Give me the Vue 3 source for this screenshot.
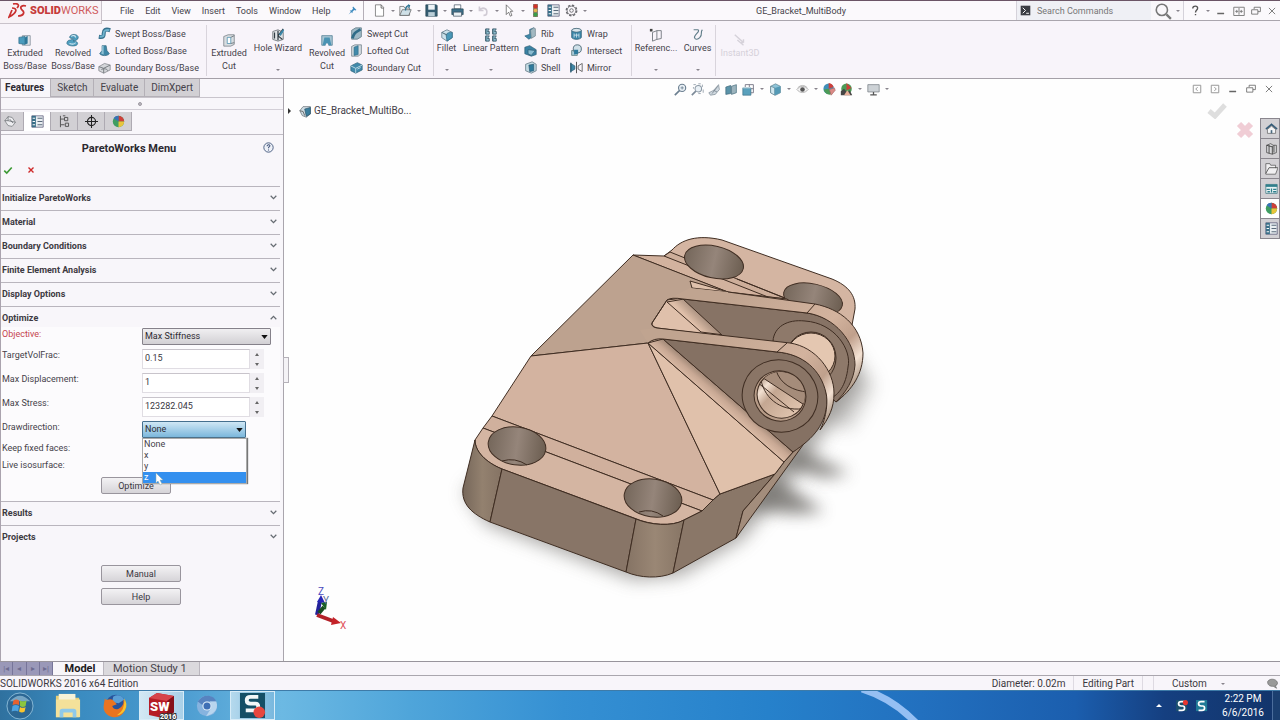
<script setup>
import { ref, h } from 'vue'

const stroke = (d, c = '#5c6268', w = 1.2) => `<path d="${d}" fill="none" stroke="${c}" stroke-width="${w}"/>`
const fill = (d, c, s = 'none') => `<path d="${d}" fill="${c}" stroke="${s}" stroke-width=".8"/>`

const icons = {
  extrude: fill('M5 3h9v11H5z', '#dce3e8', '#7b8790') + fill('M1 5l7-1v9l-7-1z', '#4a9bbd', '#2f6d8a') + fill('M8 5l3-2v9l-3 1z', '#2e7698'),
  revolve: fill('M4 5c1-5 10-4 10 0 0 3-4 4-6 4 4 0 6 2 5 4-2 3-11 2-12-1 0-2 1-4 4-4 2-1 5-1 4-2-1 0-3 1-5-1z', '#4f9fc0', '#356d87') + stroke('M6 4c2-2 5-1 5 1M4 12c3 1 6 1 7-1', '#d3e6ef'),
  sweep: stroke('M1 12c6 1 6-1 6-4 0-4 2-6 8-4', '#356f8c', 5) + stroke('M2 12c5 0 5-1 5-4 0-4 3-5 7-4', '#6fb2cd', 2.4),
  loft: fill('M5 2h5l1 6 3 4c-2 3-10 3-12 0l3-4z', '#3e86a6', '#2c617b') + fill('M5 2h2v11l-3-1 1-5z', '#8ec0d4'),
  boundary: fill('M1 7l7-4 7 2v6l-8 4-6-3z', '#d4d6da', '#72767c') + stroke('M1 7l6 2 8-4M7 9v6M4 11c2-3 8-1 8 1', '#777c82'),
  boundaryCut: fill('M1 6l8-4 6 3v6l-8 4-6-3z', '#4189aa', '#285c76') + stroke('M1 6l6 3 8-4M7 9v6M9 10l4-2', '#b8d6e2'),
  cut: fill('M2 4l5-2h7v11l-4 2H2z', '#d9dde1', '#6b747b') + fill('M6 5h4v7H6z', '#fff', '#3c87a8') + stroke('M10 5l4-2M10 12l4-1', '#6b747b', 1),
  hole: fill('M2 4l6-2 6 3v8l-6 2-6-2z', '#dfe2e5', '#545b61') + stroke('M4 5v7M8 3v11M14 1L8 9M8 9l5 4', '#2f3a42', 1.4) + fill('M9 7l5-6 1 2-4 6z', '#3c87a8'),
  revCut: fill('M2 3h12v11h-4c0-4-4-4-4 0H2z', '#a9c6d4', '#45758c') + fill('M5 5h6l2 9h-3c0-3-4-3-4 0H3z', '#4b93b3'),
  sweepCut: fill('M2 4l5-3h7v11l-5 3H2z', '#9eb9c6', '#4c6774') + stroke('M3 14c2-8 5-8 10-11', '#2f6c88', 3.4),
  loftCut: fill('M2 3l4-2h8v11l-4 3H2z', '#d5dce1', '#5c6c76') + fill('M5 4l5-2v11l-5 1z', '#4189aa', '#2f6c88'),
  fillet: fill('M2 5l6-3 6 3v6l-6 4-6-4z', '#cde2eb', '#55707e') + fill('M7 8c1-3 4-3 7-3v6l-6 4z', '#4a97b7', '#2f6c88') + stroke('M2 5l6 3', '#55707e'),
  pattern: ['1 1', '9 1', '1 9', '9 9'].map(p => `<path transform="translate(${p})" d="M1 0v6M1 0h4L3 3h2v3H1z" fill="#8bbccf" stroke="#3f5f6e"/>`).join(''),
  rib: fill('M1 11l6-2V3l5-2v10l-6 4z', '#4189aa', '#2c617b') + fill('M8 4l4-3 2 1v9l-5 3z', '#a2b8c2', '#6b7f88'),
  draft: fill('M1 4l6-2 8 5v6l-6 2-8-3z', '#3a82a4', '#29586f') + fill('M5 7l9 1-5 6-4-2z', '#89bbd0', '#29586f'),
  shell: fill('M2 4l8-3 5 3v8l-6 3-7-3z', '#c5dbe4', '#49616d') + fill('M6 5l6-1v8l-5 1z', '#2f7a9c', '#29586f'),
  wrap: fill('M2 4c2-3 10-3 12 0v9c-2 3-10 3-12 0z', '#3b86a8', '#29586f') + fill('M2 4c2-3 10-3 12 0-2 3-10 3-12 0z', '#d8e6ed', '#496572') + stroke('M5 8v5M8 8v5M11 8v5M5 10h6', '#cfe3ec', 1),
  intersect: fill('M2 8h7v6H2z', '#a9c9d7', '#466') + '<circle cx="9" cy="6" r="5" fill="#cfe0e8" stroke="#3c5a68"/>' + fill('M5 7h5v5l-5 1z', '#2f7a9c'),
  mirror: fill('M1 3l5 3v4l-5 3z', '#3e86a6', '#29586f') + stroke('M1 2v12', '#29586f', 1.4) + stroke('M8 1v14', '#333', 1) + stroke('M15 3l-5 3v4l5 3z', '#555', 1),
  reference: stroke('M4 5l5-2v10l-5 2zM9 3h5v9l-5 1', '#6f757b', 1) + fill('M1 1h3v3H1z', '#444'),
  curves: stroke('M3 2h5c3 2-5 6-4 9 1 3 4 2 6 0 4-4 0-6 3-9', '#5f7c88', 1.3),
  instant: stroke('M2 2l10 9M12 11H8M12 11V7M5 8l7 6', '#d6d2da', 1.6),
  file: fill('M3 1h7l3 3v11H3z', '#fff', '#555') + stroke('M10 1v4h3', '#555', 1),
  open: fill('M1 3h5l1 2h6v9H1z', '#eef3f5', '#555') + fill('M4 7h11l-3 7H1z', '#cfe0e7', '#555') + stroke('M8 8c0-4 1-6 5-6M11 1l2 1-1 3', '#2c7594', 1.5),
  save: fill('M1 1h13l1 1v13H1z', '#355d72', '#24424f') + fill('M4 1h8v6H4z', '#eef4f7') + fill('M4 10h8v5H4z', '#b9cdd6'),
  print: fill('M4 1h8v5H4z', '#fff', '#345') + fill('M1 6h14v7H1z', '#3e718a', '#24424f') + fill('M3 10h10v5H3z', '#e8eff2', '#345'),
  undo: stroke('M3 3v5h5M3 8c3-5 10-3 9 3 0 2-2 3-4 3', '#d0cbd4', 2),
  pointer: fill('M4 1l8 8H9l2 5-2 1-2-5-3 3z', '#fff', '#444'),
  traffic: fill('M5 0h6v16H5z', '#8a7a6c') + '<circle cx="8" cy="3" r="2.6" fill="#d2322a"/><circle cx="8" cy="8" r="2.2" fill="#e4b54a"/><circle cx="8" cy="13" r="2.6" fill="#3d9d4a"/>',
  list: fill('M1 1h14v14H1z', '#e9eef1', '#446') + fill('M1 1h5v14H1z', '#3a6f88') + stroke('M8 4h6M8 8h6M8 12h6', '#567', 1.2) + stroke('M2 4h3M2 8h3M2 12h3', '#fff', 1.2),
  gear: '<circle cx="8" cy="8" r="6.4" fill="none" stroke="#6a6a6e" stroke-width="1.800" stroke-dasharray="2.8 2.2"/><circle cx="8" cy="8" r="5.400" fill="#faf8fb" stroke="#6a6a6e" stroke-width="1.100"/><circle cx="8" cy="8" r="2.200" fill="none" stroke="#6a6a6e" stroke-width="1.100"/>',
  pin: fill('M9 1l6 6-2 1-2-1-3 3v3l-2-2-5 4 4-5-2-2h3l3-3-1-2z', '#3b8abf'),
  zoomFit: '<circle cx="10" cy="6" r="4.4" fill="#eaf1f6" stroke="#6b7f90" stroke-width="1.4"/>' + stroke('M7 9l-6 6', '#6b7f90', 2) + stroke('M8 6h4M10 4v4', '#6b7f90', 1),
  zoomArea: '<circle cx="9" cy="7" r="4" fill="#eaf1f6" stroke="#8b98a4" stroke-width="1.3"/>' + stroke('M6 10l-5 5', '#7c8a98', 2) + stroke('M3 2h3M9 1h3M14 2v3M15 8v4M12 13h-3M3 5v2', '#8b98a4', 1),
  prevView: fill('M1 12l6-3 6-7 1 6-5 6-6 1z', '#cfd8df', '#76838e') + stroke('M5 13l7-9M7 9l4 2', '#76838e', 1),
  section: fill('M1 5l6-2v10l-6 1z', '#5a93a9', '#3c6475') + fill('M8 4l6-2v10l-6 2z', '#9bb3bd', '#3c6475'),
  orient: fill('M1 6h10v9H1z', '#5aa1bd', '#3d6f85') + stroke('M4 5V2h10v10h-3M9 2v3M11 7h3', '#667', 1) + stroke('M1 6h10', '#d5eaf2', 1),
  cube: fill('M2 4l6-3 6 3v8l-6 3-6-3z', '#8ec4d8', '#5b7c8a') + fill('M2 4l5 2v9l-5-3z', '#d1e7ef', '#5b7c8a') + fill('M7 6l7-2v8l-7 3z', '#549ab6'),
  eye: fill('M1 8c4-5 10-5 14 0-4 5-10 5-14 0z', '#f2f2f2', '#9a9a9a') + '<circle cx="8" cy="8" r="2.800" fill="#555"/>' + stroke('M2 6c4-4 8-4 12 0', '#aaa', 1),
  ball: '<circle cx="8" cy="8" r="7" fill="#3f9d62"/>' + fill('M8 8V1a7 7 0 0 1 7 7z', '#cf3f3a') + fill('M8 8h7a7 7 0 0 1-7 7z', '#e9c53b') + fill('M8 8L2 4a7 7 0 0 1 6-3z', '#3971b8'),
  apple: '<circle cx="7" cy="7" r="6.5" fill="#3f8fb8"/>' + fill('M7 7V0a7 7 0 0 1 6 5z', '#cf3f3a') + fill('M1 8l6-1 4 6c-2 3-9 1-10-5z', '#4c9b57') + fill('M8 8l6-2 1 3-5 6z', '#db8b86', '#a66'),
  scene: '<circle cx="8" cy="7" r="6.5" fill="#4c9b57"/>' + fill('M8 0l6 6-6 3z', '#cf3f3a') + fill('M1 15V10l4-3 4 5 3-3 3 6z', '#464646') + fill('M5 15l4-6 4 6z', '#e9b09b'),
  monitor: fill('M1 2h14v9H1z', '#cdd2d6', '#6b7278') + stroke('M8 11v3M4 14.500h8', '#555', 1.6),
  home: fill('M1 8l7-6 7 6-1 1-6-5-6 5z', '#2b5574', '#2b5574') + fill('M3 9l5-4 5 4v5H3z', '#f4f5f7', '#555') + fill('M7 10h2v4H7z', '#4b6a80'),
  library: fill('M2 4l5-2 3 2 4 0v9l-5 2-7-2z', '#d7d7da', '#333') + stroke('M5 4v10M9 5v10M11 4v9M2 4l7 2', '#333', 1),
  folder: fill('M1 2h5l1 2h6v3h3l-3 8H1z', '#f0eff1', '#444') + stroke('M1 14l4-7h9', '#444', 1),
  palette: fill('M1 3h14v11H1z', '#e7f2f3', '#2a6874') + fill('M1 3h14v3H1z', '#2f7f8c') + stroke('M2 9h4M10 9h4M8 8v5M3 12h3M10 12h4', '#2f7f8c', 1.6),
  part: fill('M1 7l4-5 5 1 4 6-4 5-5-1z', '#ededf0', '#686c70') + stroke('M5 2v5l5 1M10 8l4 1M5 7l-4 0M7 5l4 5', '#686c70', 1),
  partBlue: fill('M1 7l4-5h9v9l-5 4-5-2z', '#cfdde4', '#555f66') + fill('M7 5l7-2v8l-5 3z', '#3a7d9c', '#2c5266') + stroke('M1 7l4 1 2 5', '#555', 1),
  config: stroke('M3 1v14M3 5h5M3 12h5M8 3h4v4H8zM9 10h4v4H9zM6 1h3', '#555', 1.2),
  target: '<circle cx="8" cy="8" r="5" fill="none" stroke="#222" stroke-width="1.4"/>' + stroke('M8 0v16M0 8h16', '#222', 1.3),
  help: '<circle cx="8" cy="8" r="6.800" fill="#eef1f8" stroke="#4c5f82" stroke-width="1.4"/>' + stroke('M6 6c0-3 5-2 4 0-.5 1-2 1-2 3M8 11v1.500', '#3c4f78', 1.5),
  check: stroke('M2 9l4 4 8-9', '#3d9a35', 2.6),
  cross: stroke('M3 3l10 10M13 3L3 13', '#cf2a2a', 2.8),
  down: stroke('M3 5l5 5 5-5', '#666b72', 2.2),
  up: stroke('M3 11l5-5 5 5', '#666b72', 2.2),
  search: '<circle cx="7" cy="7" r="5" fill="none" stroke="#777" stroke-width="1.4"/>' + stroke('M11 11l4 4', '#777', 2),
  prompt: fill('M1 1h14v14H1z', '#3a3d44') + stroke('M4 4l4 4-4 4M9 12h4', '#fff', 1.4),
  question: stroke('M4 5c0-5 8-4 7 0 0 2-3 3-3 6M8 13v2', '#555', 2),
  min: stroke('M2 12h11', '#666', 2.4),
  span: stroke('M1 3h14v11H1zM3 8.500h4M9 8.500h4M5 6.500v4M11 6.500v4M8 4v9', '#777', 1.2),
  restore: stroke('M5 5V2h10v7h-4M1 6h10v7H1z', '#666', 1.3),
  close: stroke('M3 3l10 10M13 3L3 13', '#777', 1.5),
  winLeft: stroke('M2 2h12v12H2zM9 5L6 8l3 3', '#999', 1.6),
  winRight: stroke('M2 2h12v12H2zM7 5l3 3-3 3', '#999', 1.6),
  chat: fill('M1 5c3-5 12-4 14 1 1 3-1 5-3 5l2 4-5-3C4 13 0 9 1 5z', '#999', '#555')
}

const Icon = (p) => h('svg', { viewBox: '0 0 16 16', width: p.s || 14, height: p.s || 14, 'aria-hidden': 'true', innerHTML: icons[p.n] })
Icon.props = ['n', 's']

const menus = ['File', 'Edit', 'View', 'Insert', 'Tools', 'Window', 'Help']
const quick = [
  { n: 'file', t: 'New', d: 1 }, { n: 'open', t: 'Open', d: 1 }, { n: 'save', t: 'Save', d: 1 }, { n: 'print', t: 'Print', d: 1 },
  { n: 'undo', t: 'Undo', d: 1 }, { n: 'pointer', t: 'Select', d: 1 }, { n: 'traffic', t: 'Rebuild' }, { n: 'list', t: 'Properties' }, { n: 'gear', t: 'Options', d: 1 }
]
const ribbon = [
  [
    { k: 'big', w: 'w48', n: 'extrude', l: ['Extruded', 'Boss/Base'] },
    { k: 'big', w: 'w48', n: 'revolve', l: ['Revolved', 'Boss/Base'] },
    { k: 'col', w: 'w109', i: [['sweep', 'Swept Boss/Base'], ['loft', 'Lofted Boss/Base'], ['boundary', 'Boundary Boss/Base']] }
  ],
  [
    { k: 'big', w: 'w44', n: 'cut', l: ['Extruded', 'Cut'] },
    { k: 'big', w: 'w54', n: 'hole', l: ['Hole Wizard'], d: 1 },
    { k: 'big', w: 'w44', n: 'revCut', l: ['Revolved', 'Cut'] },
    { k: 'col', w: 'w84', i: [['sweepCut', 'Swept Cut'], ['loftCut', 'Lofted Cut'], ['boundaryCut', 'Boundary Cut']] }
  ],
  [
    { k: 'big', w: 'w25', n: 'fillet', l: ['Fillet'], d: 1 },
    { k: 'big', w: 'w64', n: 'pattern', l: ['Linear Pattern'], d: 1 },
    { k: 'col', w: 'w46', i: [['rib', 'Rib'], ['draft', 'Draft'], ['shell', 'Shell']] },
    { k: 'col', w: 'w62', i: [['wrap', 'Wrap'], ['intersect', 'Intersect'], ['mirror', 'Mirror']] }
  ],
  [
    { k: 'big', w: 'w48', n: 'reference', l: ['Referenc...'], d: 1 },
    { k: 'big', w: 'w35', n: 'curves', l: ['Curves'], d: 1 }
  ],
  [{ k: 'big', w: 'w48', n: 'instant', l: ['Instant3D'], off: 1 }]
]
const tabs = ['Features', 'Sketch', 'Evaluate', 'DimXpert']
const managers = [['part', 'Feature tree'], ['list', 'Property manager'], ['config', 'Configurations'], ['target', 'Dimensions'], ['ball', 'Display']]
const closed = ['Initialize ParetoWorks', 'Material', 'Boundary Conditions', 'Finite Element Analysis', 'Display Options']
const numbers = ref([
  { id: 'vol', l: 'TargetVolFrac:', v: '0.15' },
  { id: 'disp', l: 'Max Displacement:', v: '1' },
  { id: 'stress', l: 'Max Stress:', v: '123282.045' }
])
const directions = ['None', 'x', 'y', 'z']
const headsUp = [['zoomFit', 'Zoom to fit'], ['zoomArea', 'Zoom to area'], ['prevView', 'Previous view'], ['section', 'Section view'], ['orient', 'View orientation', 1], ['cube', 'Display style', 1], ['eye', 'Hide or show', 1], ['apple', 'Appearance'], ['scene', 'Scene', 1], ['monitor', 'View settings', 1]]
const docControls = [['winLeft', 'Collapse left'], ['winRight', 'Collapse right'], ['min', 'Minimize'], ['restore', 'Restore'], ['close', 'Close document']]
const taskPane = [['home', 'Resources'], ['library', 'Design library'], ['folder', 'File explorer'], ['palette', 'View palette'], ['ball', 'Appearances'], ['list', 'Custom properties']]
</script>

<template>
  <div class="app">
    <header class="title-bar">
      <div class="logo">
        <svg viewBox="0 0 20 16" width="20" height="16" aria-hidden="true">
          <path d="M5 1c5-1 7 1 4 4M4 5c6 0 5 5-3 9l3-7M18 3c-4-1-7 1-4 4 3 2 2 6-4 6" fill="none" stroke="#c9302f" stroke-width="1.700" />
        </svg>
        <span><b>SOLID</b>WORKS</span>
      </div>
      <nav class="menus">
        <button v-for="m in menus" :key="m" type="button">{{ m }}</button>
        <button type="button" class="pin" aria-label="Pin menu"><Icon n="pin" s="9" /></button>
      </nav>
      <div class="quick">
        <button v-for="q in quick" :key="q.t" type="button" :class="{ drop: q.d }" :aria-label="q.t"><Icon :n="q.n" s="13" /><i v-if="q.d" class="caret"></i></button>
      </div>
      <div class="doc-title">GE_Bracket_MultiBody</div>
      <div class="search">
        <Icon n="prompt" s="11" />
        <input type="text" aria-label="Search Commands" placeholder="Search Commands">
        <button type="button" aria-label="Search"><Icon n="search" s="18" /><i class="caret"></i></button>
      </div>
      <div class="window-controls">
        <button type="button" aria-label="Help" class="ask"><Icon n="question" s="11" /><i class="caret"></i></button>
        <button type="button" aria-label="Minimize"><Icon n="min" s="10" /></button>
        <button type="button" aria-label="Span displays"><Icon n="span" s="12" /></button>
        <button type="button" aria-label="Restore"><Icon n="restore" s="10" /></button>
        <button type="button" aria-label="Close"><Icon n="close" s="10" /></button>
      </div>
    </header>

    <section class="ribbon">
      <div v-for="(g, gi) in ribbon" :key="gi" class="group">
        <template v-for="(c, ci) in g" :key="ci">
          <button v-if="c.k === 'big'" type="button" class="big" :class="[c.w, { single: c.d, off: c.off }]">
            <Icon :n="c.n" s="14" />
            <span v-for="l in c.l" :key="l">{{ l }}</span>
            <i v-if="c.d" class="caret"></i>
          </button>
          <div v-else class="col" :class="c.w">
            <button v-for="s in c.i" :key="s[1]" type="button"><Icon :n="s[0]" s="13" />{{ s[1] }}</button>
          </div>
        </template>
      </div>
    </section>

    <main class="work">
      <aside class="panel">
        <nav class="tabs">
          <button v-for="(t, i) in tabs" :key="t" type="button" :class="{ active: i === 0 }">{{ t }}</button>
        </nav>
        <div class="handle"><i></i></div>
        <nav class="managers">
          <button v-for="(m, i) in managers" :key="m[0]" type="button" :class="{ active: i === 1 }" :aria-label="m[1]"><Icon :n="m[0]" s="13" /></button>
        </nav>
        <div class="panel-head">
          <h1>ParetoWorks Menu</h1>
          <button type="button" class="help" aria-label="Help topic"><Icon n="help" s="11" /></button>
          <div class="confirm">
            <button type="button" aria-label="OK"><Icon n="check" s="10" /></button>
            <button type="button" aria-label="Cancel"><Icon n="cross" s="8" /></button>
          </div>
        </div>
        <button v-for="s in closed" :key="s" type="button" class="section">{{ s }}<Icon n="down" s="9" /></button>
        <button type="button" class="section">Optimize<Icon n="up" s="9" /></button>
        <form class="optimize" @submit.prevent>
          <div class="row first">
            <label for="objective" class="required">Objective:</label>
            <span class="select wide">
              <select id="objective"><option>Max Stiffness</option></select>
              <svg viewBox="0 0 8 5" width="7" height="4" aria-hidden="true"><path d="M0 0h8L4 5z" fill="#111" /></svg>
            </span>
          </div>
          <div v-for="f in numbers" :key="f.id" class="row">
            <label :for="f.id">{{ f.l }}</label>
            <span class="number">
              <input :id="f.id" v-model="f.v" type="text">
              <span class="spin">
                <button type="button" aria-label="Increase"><i class="tri up"></i></button>
                <button type="button" aria-label="Decrease"><i class="tri"></i></button>
              </span>
            </span>
          </div>
          <div class="row first">
            <label for="draw">Drawdirection:</label>
            <span class="select open">
              <select id="draw"><option v-for="d in directions" :key="d">{{ d }}</option></select>
              <svg viewBox="0 0 8 5" width="7" height="4" aria-hidden="true"><path d="M0 0h8L4 5z" fill="#111" /></svg>
              <ul class="menu">
                <li v-for="d in directions" :key="d" :class="{ hot: d === 'z' }">{{ d }}</li>
              </ul>
              <svg class="cursor" viewBox="0 0 9 14" width="9" height="14" aria-hidden="true"><path d="M1 1v10l2-2 2 4 2-1-2-4h3z" fill="#fff" stroke="#8aa" stroke-width=".5" /></svg>
            </span>
          </div>
          <div class="row short"><span>Keep fixed faces:</span></div>
          <div class="row short"><span>Live isosurface:</span></div>
          <button type="submit" class="push run">Optimize</button>
        </form>
        <button type="button" class="section">Results<Icon n="down" s="9" /></button>
        <button type="button" class="section">Projects<Icon n="down" s="9" /></button>
        <div class="links">
          <button type="button" class="push">Manual</button>
          <button type="button" class="push">Help</button>
        </div>
        <i class="splitter"></i>
      </aside>

      <section class="viewport">
        <svg class="scene" viewBox="284 79 996 582" role="img" aria-label="Bracket model">
          <defs>
            <filter id="soft" x="-30%" y="-30%" width="160%" height="160%"><feGaussianBlur stdDeviation="9" /></filter>
            <filter id="soft2" x="-50%" y="-50%" width="200%" height="200%"><feGaussianBlur stdDeviation="8" /></filter>
            <linearGradient id="hole"><stop offset="0" stop-color="#75675b" /><stop offset=".5" stop-color="#95857a" /><stop offset="1" stop-color="#6c5e51" /></linearGradient>
            <linearGradient id="cornerL"><stop offset="0" stop-color="#76675a" /><stop offset=".5" stop-color="#93816f" /><stop offset="1" stop-color="#857364" /></linearGradient>
            <linearGradient id="cornerR"><stop offset="0" stop-color="#857364" /><stop offset=".5" stop-color="#9a8775" /><stop offset="1" stop-color="#877565" /></linearGradient>
            <linearGradient id="rim1" gradientUnits="userSpaceOnUse" x1="740" y1="290" x2="850" y2="400"><stop offset="0" stop-color="#c0a490" /><stop offset=".55" stop-color="#d3b39e" /><stop offset=".72" stop-color="#c0a08c" /><stop offset=".84" stop-color="#f4e2d3" /><stop offset="1" stop-color="#8e7866" /></linearGradient>
            <linearGradient id="rim2" gradientUnits="userSpaceOnUse" x1="700" y1="330" x2="826" y2="430"><stop offset="0" stop-color="#c0a490" /><stop offset=".6" stop-color="#d3b39e" /><stop offset=".78" stop-color="#bfa08c" /><stop offset=".88" stop-color="#f4e2d3" /><stop offset="1" stop-color="#8e7866" /></linearGradient>
            <linearGradient id="bore" x1="0" y1=".2" x2="1" y2=".6"><stop offset="0" stop-color="#a78d7a" /><stop offset=".2" stop-color="#f3e1d2" /><stop offset=".4" stop-color="#c4a792" /><stop offset="1" stop-color="#e0c4ae" /></linearGradient>
            <linearGradient id="blend" gradientUnits="userSpaceOnUse" x1="712" y1="402" x2="724" y2="388"><stop offset="0" stop-color="#dfbfa9" /><stop offset=".5" stop-color="#c8a894" /><stop offset="1" stop-color="#927c6c" /></linearGradient>
            <linearGradient id="blend2" gradientUnits="userSpaceOnUse" x1="692" y1="322" x2="704" y2="310"><stop offset="0" stop-color="#dfbfa9" /><stop offset="1" stop-color="#8f7a6b" /></linearGradient>
            <clipPath id="boreClip"><ellipse cx="781" cy="395" rx="24" ry="23" transform="rotate(20 781 395)" /></clipPath>
          </defs>
          <g fill="#76736f">
            <path d="M464 492L486 524 634 580 680 576 742 540 800 470 860 380 800 300 500 460z" filter="url(#soft)" opacity=".62" />
            <path d="M796 446L850 474 822 478 776 464z" filter="url(#soft2)" opacity=".8" />
            <path d="M772 474L824 512 790 514 740 506z" filter="url(#soft2)" opacity=".85" />
            <path d="M850 345L874 385 850 430 820 420z" filter="url(#soft)" opacity=".35" />
          </g>
          <g stroke="#3f2d22" stroke-width="1" stroke-linejoin="round">
            <path d="M664 256L672 250C681 240 697 234 722 240L832 279C849 286 856 296 855 309L852 325 768 300z" fill="#d4b5a2" />
            <path d="M670 252L787 299 728 293 664 256z" fill="#cdae9a" />
            <path d="M633 255L664 256 768 297 730 293z" fill="#d2b29e" />
            <ellipse cx="714" cy="262" rx="30" ry="16" transform="rotate(13 714 262)" fill="url(#hole)" />
            <ellipse cx="813" cy="299" rx="30" ry="15" transform="rotate(13 813 299)" fill="url(#hole)" />
            <path d="M737 279L785 298" fill="none" />
            <path d="M633 255L728 292 787 299 828 330 780 350 648 343 531 356z" fill="#bda28f" />
            <path d="M690 281l2 7 36 4z" fill="#dfc1ac" />
            <path d="M531 356L648 343 720 494 713 500 492 416z" fill="#d3b3a0" />
            <path d="M492 416L713 500 702 511 483 428z" fill="#d0b09d" />
            <path d="M483 428L702 511 684 520C672 527 650 525 634 518L502 469C485 462 475 451 475 440z" fill="#d4b5a2" />
            <path d="M475 440L463 488C461 504 472 514 490 522L502 469C485 462 475 451 475 440z" fill="url(#cornerL)" />
            <path d="M502 469L636 519 626 572 490 522z" fill="#887567" />
            <path d="M636 519C650 525 672 527 684 520L673 573C659 579 640 578 626 572z" fill="url(#cornerR)" />
            <path d="M684 520L702 511 713 500 720 494 775 474 743 511 736 538 673 573z" fill="#8a7768" />
            <path d="M775 474L784 462 793 452 808 438 736 538 743 511z" fill="#a38d7c" />
            <path d="M648 343L784 462 775 474 720 494z" fill="#e0c1ab" />
            <path d="M648 343L663 339 793 452 784 462z" fill="url(#blend)" />
            <ellipse cx="517" cy="446" rx="29" ry="19" transform="rotate(8 517 446)" fill="url(#hole)" />
            <path d="M502 461q13-4 25 4" fill="none" />
            <ellipse cx="653" cy="498" rx="29" ry="19" transform="rotate(8 653 498)" fill="url(#hole)" />
            <path d="M639 512q13-4 24 4" fill="none" />

            <path d="M667 300L683 298 760 320 770 342 657 328Q651 326 652 323z" fill="#dfc0ab" />
            <path d="M667 302L701 332 724 335 684 299z" fill="url(#blend2)" />
            <path d="M683 299L807 313C835 317 857 342 857 365C856 380 848 392 836 402L770 342 723 336z" fill="#877365" />
            <path d="M667 300Q671 297 683 299L807 313C835 317 855 342 855 365C854 380 846 392 836 402C852 390 863 374 863 353C861 325 840 309 815 304L728 292 690 288z" fill="url(#rim1)" stroke="none" />
            <path d="M652 323L667 300Q671 297 683 299L807 313C835 317 855 342 855 365C854 380 846 392 836 402C852 390 863 374 863 353C861 325 840 309 815 304L728 292M815 304L807 313" fill="none" />
            <path d="M773 341C774 327 787 319 805 321C835 323 852 350 848 367C846 386 838 395 831 398L800 362z" fill="#8e796a" />
            <ellipse cx="811" cy="358" rx="25" ry="26" fill="#98816f" />
            <ellipse cx="811" cy="356" rx="24" ry="23" fill="#e4c7b1" />

            <path d="M663 339L777 352C808 354 827 377 827 401C826 424 814 438 793 452z" fill="#857163" />
            <path d="M657 328L790 343C816 347 834 371 834 393C834 408 829 418 820 430C827 417 828 400 826 393C821 370 803 354 777 352L663 339Q654 338 648 343L640 330z" fill="url(#rim2)" stroke="none" />
            <path d="M652 323Q651 327 657 328L790 343C816 347 834 371 834 393C834 408 829 418 820 430C827 417 828 400 826 393C821 370 803 354 777 352L663 339Q654 338 648 343M787 343L777 352" fill="none" />
            <ellipse cx="780" cy="396" rx="38" ry="36" transform="rotate(20 780 396)" fill="#8a7566" />
            <ellipse cx="780" cy="396" rx="26" ry="25" transform="rotate(20 780 396)" fill="#b79c88" />
            <ellipse cx="781" cy="395" rx="24" ry="23" transform="rotate(20 781 395)" fill="url(#bore)" />
            <g clip-path="url(#boreClip)">
              <path d="M757 374L812 410 812 365 776 365z" fill="#a58c7a" />
              <path d="M757 382L794 412M761 380C765 400 783 413 807 408M776 370C780 384 793 391 808 392" fill="none" />
            </g>
          </g>
          <g class="triad">
            <path d="M317 615L320 601" stroke="#22219a" stroke-width="4" /><path d="M321 595l4 8-8-1z" fill="#2525b5" />
            <path d="M319 613l5-6" stroke="#174c20" stroke-width="4" /><path d="M321 603l6-1-1 8z" fill="#176026" />
            <path d="M317 615l16 6" stroke="#b32128" stroke-width="4" /><path d="M333 617l8 6-10 2z" fill="#c42229" />
            <text x="318" y="595" fill="#4948bd">Z</text><text x="323" y="604" fill="#5a6d9d">Y</text><text x="340" y="629" fill="#e0505a">X</text>
          </g>
        </svg>
        <div class="tree"><i class="tri side"></i><Icon n="partBlue" s="13" /><span>GE_Bracket_MultiBo...</span></div>
        <div class="heads-up">
          <button v-for="b in headsUp" :key="b[0]" type="button" :aria-label="b[1]" :class="{ drop: b[2] }"><Icon :n="b[0]" s="13" /><i v-if="b[2]" class="caret"></i></button>
        </div>
        <div class="doc-controls">
          <button v-for="b in docControls" :key="b[0]" type="button" :aria-label="b[1]"><Icon :n="b[0]" s="10" /></button>
        </div>
        <div class="corner">
          <button type="button" aria-label="Accept"><svg viewBox="0 0 20 16" width="20" height="16"><path d="M2 8l6 5L18 2" fill="none" stroke="#dedede" stroke-width="5" /></svg></button>
          <button type="button" aria-label="Discard"><svg viewBox="0 0 18 18" width="18" height="18"><path d="M3 3l12 12M15 3L3 15" fill="none" stroke="#f0cdd5" stroke-width="6" /></svg></button>
        </div>
        <nav class="task-pane">
          <button v-for="(b, i) in taskPane" :key="b[1]" type="button" :aria-label="b[1]" :class="{ active: i === 4 }"><Icon :n="b[0]" s="13" /></button>
        </nav>
      </section>
    </main>

    <nav class="sheets">
      <div class="steps">
        <button type="button" aria-label="First sheet">|◂</button><button type="button" aria-label="Previous sheet">◂</button><button type="button" aria-label="Next sheet">▸</button><button type="button" aria-label="Last sheet">▸|</button>
      </div>
      <button type="button" class="sheet active">Model</button>
      <button type="button" class="sheet">Motion Study 1</button>
    </nav>

    <footer class="status">
      <span class="edition">SOLIDWORKS 2016 x64 Edition</span>
      <span class="cell">Diameter: 0.02m</span>
      <span class="cell">Editing Part</span>
      <span class="cell units">Custom<i class="caret"></i></span>
      <Icon n="chat" s="11" />
    </footer>

    <div class="taskbar">
      <svg class="streak" viewBox="0 0 80 30" width="80" height="30" aria-hidden="true"><path d="M4-2Q36 8 60 34" fill="none" stroke="#a9cdfb" stroke-width="7" opacity=".85" /></svg>
      <button type="button" aria-label="Start">
        <svg viewBox="0 0 30 30" width="28" height="28"><circle cx="15" cy="15" r="14" fill="#2c6794" stroke="#8bbbd8" /><path d="M4 10Q15-2 26 10z" fill="#a9cfe4" opacity=".6" /><path d="M8 9q3-2 6 0v5q-3-2-7 0z" fill="#e8612e" /><path d="M15 9q3 2 7 0l-1 6q-3 2-6 0z" fill="#8cc63f" /><path d="M7 15q3-2 7 0l-1 6q-3-2-7 0z" fill="#4da2e0" /><path d="M15 16q3 2 6 0l-1 5q-3 2-6 0z" fill="#fbc52d" /></svg>
      </button>
      <button type="button" aria-label="Explorer">
        <svg viewBox="0 0 30 28" width="28" height="26"><path d="M2 3h9l2 2h14v21H2z" fill="#e5cd78" /><path d="M5 1h18v8H5z" fill="#f6f2d8" /><path d="M2 7h26v19H2z" fill="#f4e19a" /><path d="M6 26v-6q0-3 3-3h12q3 0 3 3v6h-4v-5H10v5z" fill="#8fc9ea" /></svg>
      </button>
      <button type="button" aria-label="Firefox">
        <svg viewBox="0 0 28 28" width="26" height="26"><circle cx="15" cy="13" r="11" fill="#27539c" /><path d="M12 4q7-4 12 3l-6 4-7-1z" fill="#5a9fd6" /><path d="M3 6q1 2 4 1 4-1 6 2l3 3-5 2q2 5 7 3 6-3 5-10 5 6 1 13-4 7-12 6Q0 23 2 12z" fill="#ea7420" /><path d="M24 6q4 6 1 12-3 5-9 6 9-5 8-18z" fill="#f9c32c" /></svg>
      </button>
      <button type="button" class="open" aria-label="SOLIDWORKS 2016">
        <svg viewBox="0 0 30 28" width="30" height="28"><path d="M2 6l8-5 17 3v16l-7 7L2 23z" fill="#b51c25" /><path d="M2 6l8-5 17 3-7 5z" fill="#d6444a" /><path d="M20 9l7-5v16l-7 7z" fill="#86111a" /><text x="3" y="19" class="sw">SW</text><text x="13" y="27" class="yr">2016</text></svg>
      </button>
      <button type="button" aria-label="Chromium">
        <svg viewBox="0 0 26 26" width="24" height="24"><circle cx="13" cy="13" r="11" fill="#86b3df" /><path d="M3 8Q8 1 15 2q6 1 8 6H13q-4 0-5 4z" fill="#5783c0" /><path d="M23 8q3 8-4 13-3 2-7 3l5-8q2-4-1-8z" fill="#b8d5ee" /><circle cx="13" cy="13" r="5" fill="#dcebf7" /><circle cx="13" cy="13" r="3.800" fill="#3f6fb5" /></svg>
      </button>
      <button type="button" class="open dim" aria-label="Recorder">
        <svg viewBox="0 0 28 28" width="27" height="27"><path d="M1 1h26v26H1z" fill="#154f67" /><path d="M20 5H12q-4 0-4 3.500t4 3.500h5q3 0 3 3.500t-4 3.500H7" fill="none" stroke="#f2f7f9" stroke-width="4" /><circle cx="21" cy="21" r="6" fill="#e8473f" /></svg>
      </button>
      <div class="tray">
        <i class="tri up light"></i>
        <svg viewBox="0 0 14 14" width="12" height="12" aria-hidden="true"><path d="M0 0h13v13H0z" fill="#1b506f" /><path d="M10 2H6Q3 2 3 4.500T6 7h2q2 0 2 2.500T7 12H3" fill="none" stroke="#fff" stroke-width="2" /><circle cx="11" cy="3" r="3" fill="#e8372f" /></svg>
        <svg viewBox="0 0 14 14" width="12" height="12" aria-hidden="true"><path d="M0 0h13v13H0z" fill="#1f7a96" /><path d="M10 2H6Q3 2 3 4.500T6 7h2q2 0 2 2.500T7 12H3" fill="none" stroke="#fff" stroke-width="2" /></svg>
        <div class="clock"><span>2:22 PM</span><span>6/6/2016</span></div>
        <i class="peek"></i>
      </div>
    </div>
  </div>
</template>

<style>
body { background: #fff; }
</style>

<style scoped>
.app { display: flex; flex-direction: column; min-height: 100vh; box-sizing: border-box; font: 9px/12px Roboto, "Open Sans", sans-serif; color: #45424a; background: #f8f5fa; overflow: hidden; }
.app * { box-sizing: border-box; }
button { font: inherit; color: inherit; background: none; border: 0; padding: 0; margin: 0; white-space: nowrap; }
svg { display: block; flex: none; }
.caret { display: block; width: 0; height: 0; border: 2px solid transparent; border-top-color: #88848c; border-bottom: 0; flex: none; }
.tri { display: block; width: 0; height: 0; border: 2px solid transparent; border-top: 3px solid #666; border-bottom: 0; }
.tri.up { border-top: 0; border-bottom: 3px solid #666; }
.tri.side { border: 3px solid transparent; border-left-color: #333; border-right: 0; }
.tri.light { border-width: 0 3px 3px; border-bottom-color: #fff; }

.title-bar { display: flex; align-items: center; height: 21px; border-top: 1px solid #6b5566; border-bottom: 1px solid #aaa5ad; background: #fbf9fc; }
.logo { display: flex; align-items: center; align-self: flex-start; gap: 2px; width: 102px; height: 23px; padding: 0 0 3px 8px; font-size: 11px; color: #cf5a5c; background: #f7f2f6; border: solid #c9c2ca; border-width: 0 1px 1px 0; position: relative; z-index: 1; }
.logo b { font-weight: 900; color: #c63a3a; }
.menus { display: flex; align-items: center; gap: 11px; padding-left: 18px; width: 262px; height: 19px; border-right: 1px solid #b5afb8; }
.pin { margin-left: 6px; }
.quick { display: flex; align-items: center; gap: 5px; padding-left: 9px; }
.quick button { display: flex; align-items: center; gap: 5px; }
.quick .drop { width: 21px; }
.doc-title { flex: 1; text-align: center; font-size: 9px; }
.search { display: flex; align-items: center; width: 168px; height: 19px; padding-left: 3px; background: #eff0f5; border: solid #d5d2da; border-width: 0 1px; }
.search input { flex: 1; min-width: 0; height: 18px; margin-left: 6px; padding: 0; font: inherit; color: #777; background: none; border: 0; outline: 0; }
.search input::placeholder { color: #777; opacity: 1; }
.search button { display: flex; align-items: center; gap: 4px; padding: 0 3px; height: 19px; background: #f9f7fa; }
.window-controls { display: flex; align-items: center; justify-content: space-between; width: 96px; padding: 0 3px 0 6px; }
.ask { display: flex; align-items: center; gap: 5px; }

.ribbon { display: flex; height: 58px; padding: 4px 0 2px 1px; background: #f8f4fa; border-bottom: 1px solid #a5a0a8; }
.group { display: flex; border-right: 1px solid #d9d4dc; }
.group:last-child { border: 0; }
.big { display: flex; flex-direction: column; align-items: center; padding-top: 8px; line-height: 13px; height: 50px; }
.big.single { padding-top: 3px; }
.big.single .caret { margin-top: 14px; }
.big.off { color: #d5d0d9; }
.col { display: flex; flex-direction: column; }
.col button { display: flex; align-items: center; gap: 4px; height: 17px; padding-left: 1px; }
.w25 { width: 25px; } .w35 { width: 35px; } .w44 { width: 44px; } .w46 { width: 46px; } .w48 { width: 48px; } .w54 { width: 54px; } .w62 { width: 62px; } .w64 { width: 64px; } .w84 { width: 84px; } .w109 { width: 109px; }

.work { display: flex; flex: 1; }
.panel { position: relative; width: 284px; border-left: 1px solid #aaa3ae; border-right: 1px solid #a9a5ad; background: #f8f6fa; }
.tabs { display: flex; height: 19px; font-size: 10px; border-bottom: 1px solid #c9c5cc; }
.tabs button { padding: 0 6px; height: 18px; background: #d2d0d4; border: solid #b4b0b7; border-width: 0 1px 1px 0; }
.tabs .active { padding: 0 6px 0 4px; font-weight: 700; background: #f8f6fa; border-bottom: 0; color: #2c2930; }
.handle { height: 12px; padding-right: 5px; border-bottom: 1px solid #d3cfd7; display: flex; align-items: center; justify-content: center; }
.handle i { width: 4px; height: 4px; border-radius: 2px; background: #bcb8c0; border: 1px solid #9f9ba3; }
.managers { display: flex; height: 25px; padding-top: 2px; border-bottom: 1px solid #c0bcc4; }
.managers button { display: flex; align-items: center; justify-content: center; width: 27px; height: 19px; background: #d2d0d4; border-right: 1px solid #aeaab2; border-bottom: 1px solid #aeaab2; }
.managers button:first-child { width: 23px; padding-right: 4px; }
.managers .active { background: #fff; border-bottom: 0; }
.panel-head { position: relative; height: 51px; padding-top: 6px; }
h1 { margin: 0; padding-right: 26px; text-align: center; font-size: 11px; line-height: 15px; font-weight: 700; color: #2c2930; }
.help { position: absolute; right: 9px; top: 7px; }
.confirm { display: flex; align-items: center; gap: 14px; padding: 9px 0 0 2px; }
.section { display: flex; align-items: center; justify-content: space-between; width: calc(100% - 3px); height: 24px; padding: 0 2px 2px 1px; border-top: 1px solid #b9b5bd; font-size: 9px; font-weight: 700; color: #3d3a42; }
.optimize { background: #fcfbfd; margin-top: -3px; padding-bottom: 7px; margin-right: 3px; }
.row { display: grid; grid-template-columns: 140px 1fr; align-items: start; height: 24px; padding-left: 1px; line-height: 15px; }
.row.first { height: 21px; }
.row.short { height: 17px; }
.required { color: #c6444e; }
.select { position: relative; display: block; width: 104px; height: 17px; margin-top: 1px; }
.select.wide { width: 129px; }
.select select { appearance: none; width: 100%; height: 17px; padding: 0 2px; font: inherit; line-height: 15px; color: #2e2b33; background: linear-gradient(#f0eff1, #d2d0d4); border: 1px solid #85818a; border-radius: 1px; }
.select.open select { background: linear-gradient(#cfe7f5, #7bb7dc); border-color: #45708f; }
.select > svg { position: absolute; right: 3px; top: 7px; }
.menu { position: absolute; z-index: 2; left: 0; top: 17px; width: 105px; margin: 0; padding: 0; list-style: none; line-height: 11px; background: #fdfcfe; border: 1px solid #aaa; box-shadow: 1px 0 1px #777; }
.menu li { height: 11px; padding-left: 1px; }
.menu .hot { color: #fff; background: #3490ef; }
.select > .cursor { right: auto; left: 13px; top: 51px; z-index: 3; }
.number { display: flex; height: 20px; margin-top: 1px; }
.number input { width: 108px; height: 20px; padding: 0 2px 3px; font: inherit; color: #3a373f; background: #fff; border: 1px solid #e0dde3; border-top-color: #c8c4cb; }
.spin { display: flex; flex-direction: column; width: 14px; background: #f1eff3; }
.spin button { display: flex; flex: 1; align-items: center; justify-content: center; }
.push { display: block; width: 80px; height: 17px; line-height: 16px; color: #3a373f; background: linear-gradient(#f3f2f4, #d6d4d8); border: 1px solid #99959d; border-radius: 2px; }
.push.run { width: 70px; margin: 2px 0 0 100px; }
.links { display: flex; flex-direction: column; gap: 6px; padding: 16px 0 55px 100px; }
.splitter { position: absolute; right: -6px; top: 278px; width: 6px; height: 26px; background: #f4f2f6; border: 1px solid #b5b1b9; z-index: 2; }

.viewport { position: relative; flex: 1; background: #fefefe; overflow: hidden; }
.scene { position: absolute; inset: 0; width: 100%; height: 100%; }
.triad text { font-size: 10px; }
.tree { position: absolute; left: 4px; top: 25px; display: flex; align-items: center; gap: 2px; font-size: 10px; line-height: 14px; }
.tree svg { margin-left: 6px; }
.heads-up { position: absolute; top: 3px; left: 0; right: 0; display: flex; justify-content: center; gap: 4px; }
.heads-up button { display: flex; align-items: center; gap: 5px; width: 13px; height: 14px; }
.heads-up .drop { width: 23px; }
.doc-controls { position: absolute; top: 5px; right: 6px; display: flex; gap: 8px; }
.corner { position: absolute; right: 26px; top: 24px; display: flex; align-items: flex-start; gap: 9px; }
.corner button:last-child { padding-top: 18px; }
.task-pane { position: absolute; right: 0; top: 39px; border: 1px solid #8a868e; border-bottom: 0; background: #d2d0d4; }
.task-pane button { display: flex; align-items: center; justify-content: center; width: 18px; height: 20px; border-bottom: 1px solid #8a868e; padding-left: 2px; }
.task-pane .active { background: #fff; }

.sheets { display: flex; height: 14px; border-top: 1px solid #98949c; font-size: 10px; line-height: 13px; }
.steps { display: flex; width: 53px; background: #9a98b8; }
.steps button { flex: 1; font-size: 8px; line-height: 12px; color: #6d6b90; border-right: 1px solid #77759a; }
.sheet { padding: 0 9px; font-size: 11px; background: #dbd9dd; }
.sheet:last-child { width: 97px; text-align: left; border: solid #bbb7bf; border-width: 0 1px; }
.sheet.active { width: 50px; padding: 0 0 0 4px; font-weight: 700; color: #1d1a21; background: #f8f6fa; }
.status { display: flex; align-items: center; height: 15px; padding-right: 2px; border-top: 1px solid #aaa6ae; font-size: 10px; line-height: 14px; color: #3b3840; }
.edition { flex: 1; padding-top: 1px; }
.cell { padding: 1px 8px 0; border-right: 1px solid #dedae2; }
.units { display: flex; align-items: center; justify-content: space-between; margin-left: 10px; padding: 1px 10px 0 18px; width: 82px; border-left: 1px solid #dedae2; border-right: 0; }
.status svg { margin-left: 32px; }

.taskbar { position: relative; display: flex; align-items: center; height: 30px; padding-left: 5px; overflow: hidden; border-top: 1px solid #3e7ba8; background: linear-gradient(90deg, #2f719f 0, #3a8bc0 6%, #4c9cd0 14%, #6cb9e3 22%, #4fa5da 32%, #3590d3 44%, #2681cb 60%, #2270bf 72%, #1b5eae 84%, #153f80 91%, #12346a 100%); color: #fff; }
.taskbar > button { display: flex; align-items: center; justify-content: center; height: 29px; width: 46px; }
.taskbar > button:nth-of-type(1) { width: 30px; margin-right: 10px; }
.taskbar > button:nth-of-type(3) { width: 48px; }
.taskbar > .open { width: 45px; background: linear-gradient(90deg, #d3e8f4, #a9d0e8); border: 1px solid #d7ecf8; }
.taskbar > .dim { background: linear-gradient(90deg, #b5d9ed, #79b8de); }
.sw { font-size: 13px; font-weight: 900; fill: #fff; }
.yr { font-size: 7px; font-weight: 900; fill: #fff; stroke: #333; stroke-width: 2px; paint-order: stroke; }
.streak { position: absolute; left: 67%; top: 0; }
.tray { display: flex; align-items: center; gap: 8px; margin-left: auto; height: 100%; }
.tray .tri { margin-right: 6px; }
.clock { display: flex; flex-direction: column; align-items: center; font-size: 10px; line-height: 14px; margin-left: 6px; }
.peek { width: 8px; height: 100%; border-left: 1px solid #4b6d9c; background: #1b3f70; }
</style>
